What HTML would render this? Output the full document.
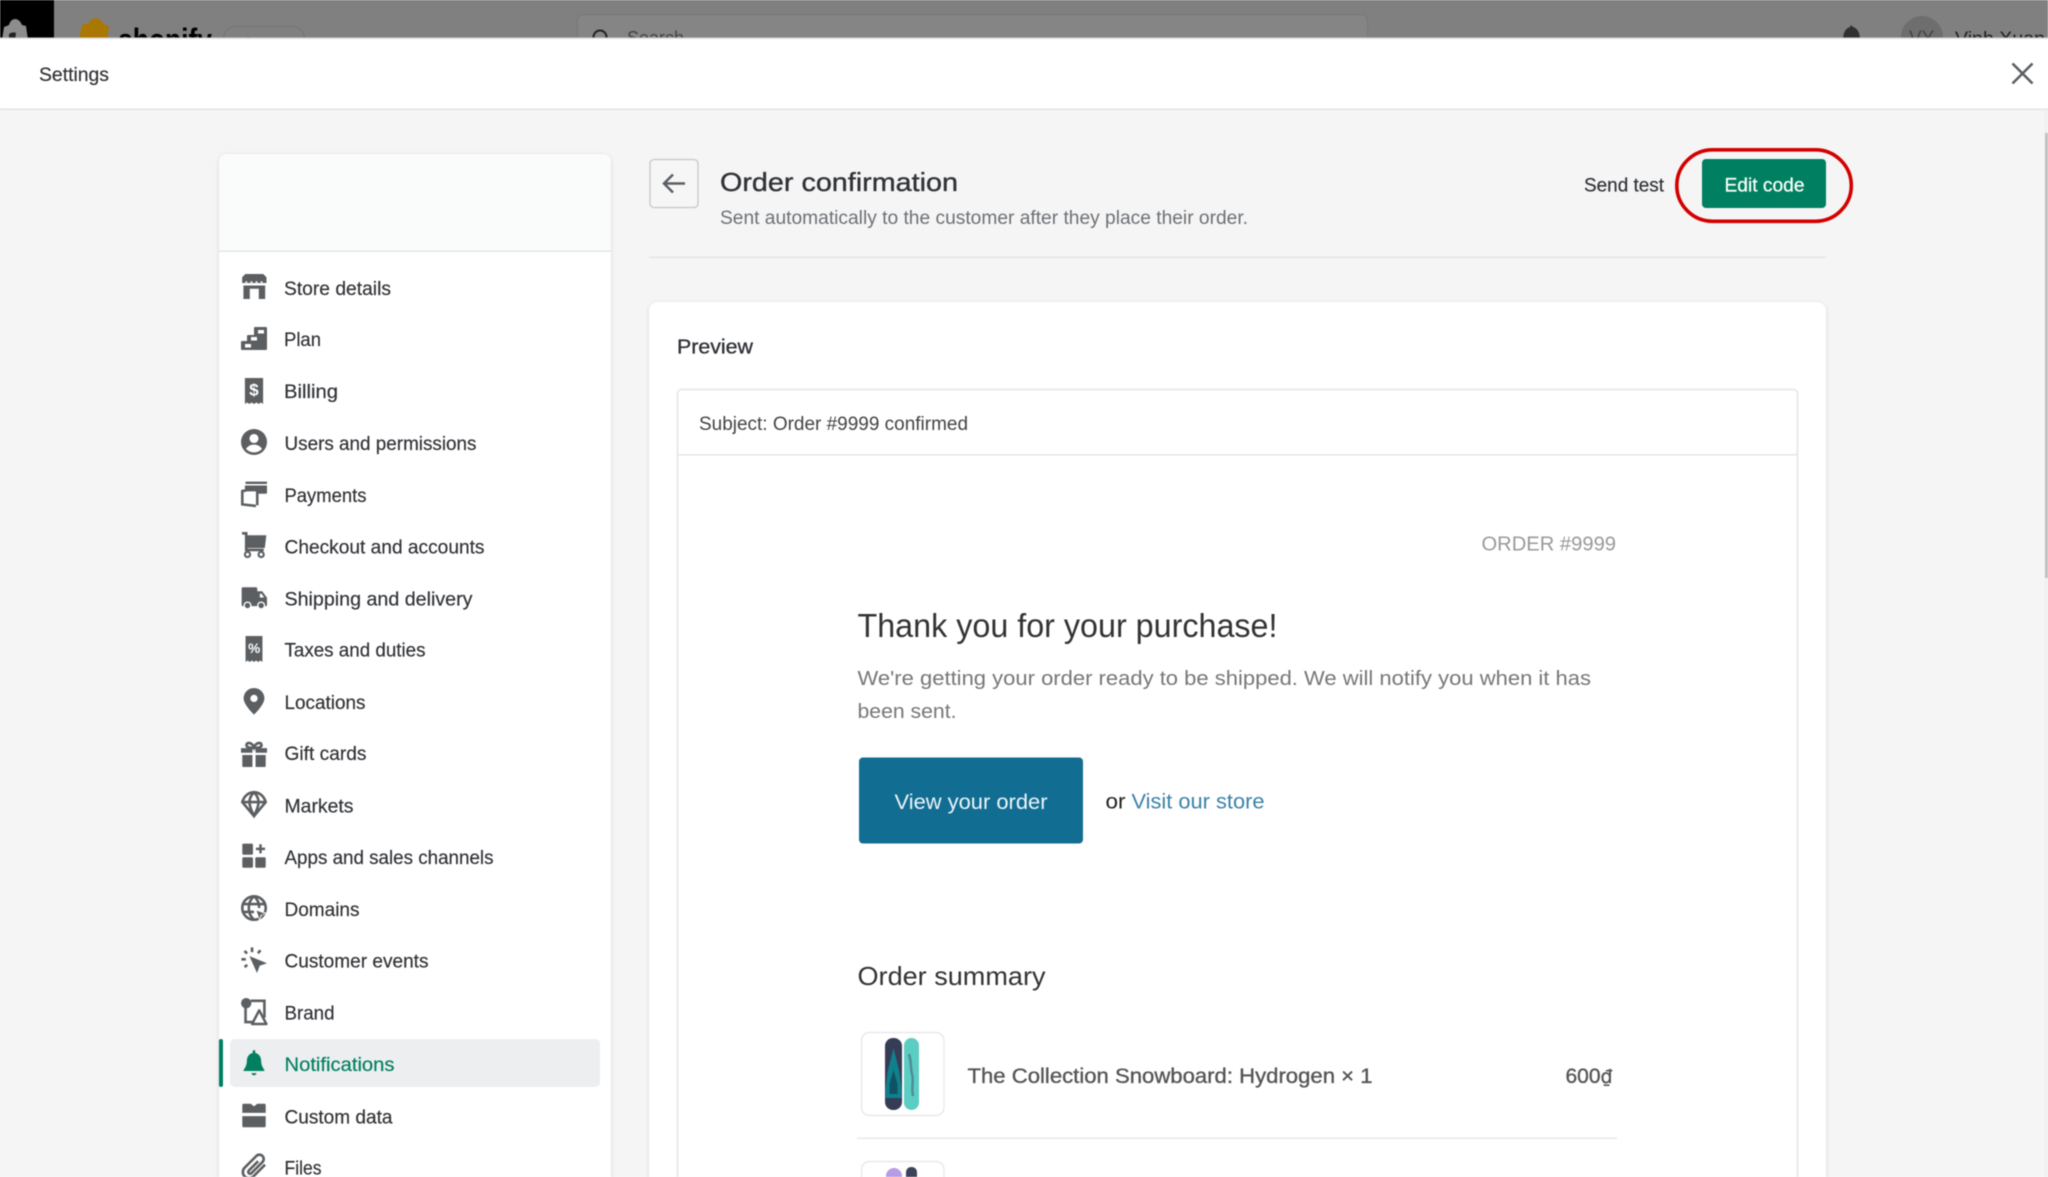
<!DOCTYPE html>
<html lang="en"><head><meta charset="utf-8"><title>Settings</title>
<style>
html,body{margin:0;padding:0;width:2048px;height:1177px;overflow:hidden;background:#f5f5f5}
svg{display:block;filter:blur(.55px)}
text{font-family:"Liberation Sans",Arial,sans-serif;font-size:19px;fill:#303236}
.s text{font-size:19px;stroke:#303236;stroke-width:.18}
.i{fill:#5c5f62}
.l{fill:none;stroke:#5c5f62;stroke-width:2}
.m{stroke:#303236;stroke-width:.35}
</style></head><body>
<svg width="2048" height="1177" viewBox="0 0 2048 1177" xmlns="http://www.w3.org/2000/svg">
<defs>
<filter id="sh" x="-5%" y="-5%" width="110%" height="110%"><feDropShadow dx="0" dy="1" stdDeviation="2" flood-color="#000" flood-opacity=".13"/></filter>
</defs>

<!-- top bar -->
<rect width="2048" height="40" fill="#808080"/>
<rect width="54" height="40" fill="#000"/>
<path d="M2 40l2-13 5-2c2-8 10-8 13 0l4 1 2 14z" fill="#8d8d8d"/>
<path d="M9 40v-6c3-2 5-2 7-1l-1 7z" fill="#222"/>
<path d="M107 40l2-14-6-2c-2-7-11-8-14-1l-7 2-3 15z" fill="#aa7700"/>
<text x="118" y="51" style="font-size:32px;font-weight:700;fill:#000" textLength="94" lengthAdjust="spacingAndGlyphs">shopify</text>
<rect x="223.500" y="26.500" width="81" height="30" rx="12" fill="none" stroke="#727272"/>
<text x="234" y="48" style="font-size:15px;fill:#444" textLength="60" lengthAdjust="spacingAndGlyphs">Winter '23</text>
<rect x="577.500" y="14.500" width="790" height="40" rx="6" fill="#858585" stroke="#777"/>
<circle cx="600" cy="37" r="6.500" fill="none" stroke="#222" stroke-width="2"/>
<text x="627" y="44" style="font-size:18px;fill:#444">Search</text>
<path d="M1843 40c0-8 3-12 7-13l1-2 2 2c4 1 7 5 7 13z" fill="#303030"/>
<circle cx="1922" cy="37" r="21" fill="#6e6e6e"/>
<text x="1909" y="44" style="font-size:19px;fill:#444">VY</text>
<text x="1955" y="45" style="font-size:19px;fill:#222" textLength="90" lengthAdjust="spacingAndGlyphs">Vinh Xuan</text>

<!-- modal -->
<rect y="38" width="2048" height="1139" fill="#f5f5f5"/>
<rect y="38" width="2048" height="71" fill="#fff"/>
<rect y="37.500" width="2048" height="1.500" fill="#dcdcdc"/>
<rect y="108.500" width="2048" height="1.500" fill="#e3e3e3"/>
<text x="39" y="81" stroke="#303236" stroke-width=".18" textLength="70" lengthAdjust="spacingAndGlyphs">Settings</text>
<path d="M2012.500 63.500l20 20M2032.500 63.500l-20 20" stroke="#5c5f62" stroke-width="2.600" fill="none"/>
<rect x="2044.500" y="110" width="3.500" height="1067" fill="#f1f1f1"/>
<rect x="2045" y="133" width="3" height="445" fill="#c1c1c1"/>

<!-- sidebar -->
<rect x="219" y="154" width="392" height="1040" rx="8" fill="#fff" filter="url(#sh)"/>
<path d="M219 251v-89a8 8 0 018-8h376a8 8 0 018 8v89z" fill="#fafbfb"/>
<rect x="219" y="250.500" width="392" height="1.500" fill="#e4e5e7"/>
<rect x="230" y="1039" width="370" height="48" rx="5" fill="#edeef0"/>
<rect x="219" y="1039" width="4" height="48" rx="2" fill="#008060"/>

<g class="s">
<text x="284" y="295" textLength="107" lengthAdjust="spacingAndGlyphs">Store details</text>
<text x="284" y="346" textLength="37" lengthAdjust="spacingAndGlyphs">Plan</text>
<text x="284" y="398" textLength="54" lengthAdjust="spacingAndGlyphs">Billing</text>
<text x="284.500" y="450" textLength="192" lengthAdjust="spacingAndGlyphs">Users and permissions</text>
<text x="284.500" y="502" textLength="82" lengthAdjust="spacingAndGlyphs">Payments</text>
<text x="284.500" y="553.500" textLength="200" lengthAdjust="spacingAndGlyphs">Checkout and accounts</text>
<text x="284.500" y="605.500" textLength="188" lengthAdjust="spacingAndGlyphs">Shipping and delivery</text>
<text x="284.500" y="656.500" textLength="141" lengthAdjust="spacingAndGlyphs">Taxes and duties</text>
<text x="284.500" y="709" textLength="81" lengthAdjust="spacingAndGlyphs">Locations</text>
<text x="284.500" y="760" textLength="82" lengthAdjust="spacingAndGlyphs">Gift cards</text>
<text x="284.500" y="812.500" textLength="69" lengthAdjust="spacingAndGlyphs">Markets</text>
<text x="284.500" y="864" textLength="209" lengthAdjust="spacingAndGlyphs">Apps and sales channels</text>
<text x="284.500" y="916" textLength="75" lengthAdjust="spacingAndGlyphs">Domains</text>
<text x="284.500" y="967.500" textLength="144" lengthAdjust="spacingAndGlyphs">Customer events</text>
<text x="284.500" y="1019.500" textLength="50" lengthAdjust="spacingAndGlyphs">Brand</text>
<text x="284.500" y="1071" textLength="110" lengthAdjust="spacingAndGlyphs" style="fill:#008060;stroke:#008060">Notifications</text>
<text x="284.500" y="1123.500" textLength="108" lengthAdjust="spacingAndGlyphs">Custom data</text>
<text x="284.500" y="1174.500" textLength="37" lengthAdjust="spacingAndGlyphs">Files</text>
</g>

<!-- icons -->
<g transform="translate(241.500,274) scale(1.28)"><path class="i" d="M3 0h14l2.500 2.500V7H.5V2.500zM1.500 9h17v10.500h-5V11.500h-7V19.500h-5z"/><path d="M3 6.300h1.500M7 6.300h1.500M11 6.300h1.500M15 6.300h1.500" stroke="#fff" stroke-width="1.100"/></g>
<g transform="translate(241,326)"><path class="i" fill-rule="evenodd" d="M255 1h11a1 1 0 011 1v21a1 1 0 01-1 1h-24a1 1 0 01-1-1v-7a1 1 0 011-1h5V10a1 1 0 011-1h6V2a1 1 0 011-1zM0 0" transform="translate(-241,0)"/><path d="M17 4h6v3.500h-6zM10 11h6v3.500h-6zM4 18h6v3.500H4z" fill="#fff"/></g>
<g transform="translate(241,378) scale(1.3)"><path class="i" d="M3 0h14v20l-1.700-1.200-1.700 1.200-1.700-1.200-1.900 1.200-1.900-1.200-1.700 1.200-1.700-1.200L3 20z"/><text x="6.300" y="13.500" style="font-size:13px;font-weight:700;fill:#fff">$</text></g>
<g transform="translate(241,429) scale(1.3)"><circle class="i" cx="10" cy="10" r="10"/><circle cx="10" cy="7.300" r="3.500" fill="#fff"/><path d="M3.800 15.300c1.800-2.600 3.800-3.300 6.200-3.300s4.400.7 6.200 3.300c-1.700 1.700-3.800 2.700-6.200 2.700s-4.500-1-6.200-2.700z" fill="#fff"/></g>
<g transform="translate(241,481) scale(1.3)"><path class="i" d="M3.500.5h16.500v1.800H3.500zM3 3.500h17v5.300a1 1 0 01-1 1h-5.500v9l-2-.3V8H3z"/><path class="l" d="M4 7.500H1.500a.5.500 0 00-.5.500V18l10.500 1.200" stroke-width="1.900"/></g>
<g transform="translate(241,532) scale(1.3)"><path class="i" d="M4.700 2.500H19.500l-1.200 9.800H4.700z"/><path class="l" d="M.8 1H4v12.800h13.500"/><circle cx="5" cy="17.300" r="2" fill="#fff" stroke="#5c5f62" stroke-width="1.600"/><circle cx="15.500" cy="17.300" r="2" fill="#fff" stroke="#5c5f62" stroke-width="1.600"/></g>
<g transform="translate(241,586) scale(1.3)"><path class="i" d="M1.500 1h10a1 1 0 011 1v2h3.800l3.700 5v5.500a1 1 0 01-1 1H1.500a1 1 0 01-1-1V2a1 1 0 011-1z"/><path d="M14.500 6h1.300l2 2.800h-3.300z" fill="#fff"/><circle class="i" cx="5" cy="15" r="2.600" stroke="#fff" stroke-width="1"/><circle class="i" cx="15.500" cy="15" r="2.600" stroke="#fff" stroke-width="1"/></g>
<g transform="translate(241,636) scale(1.3)"><path class="i" d="M3.500 0h13v20l-1.600-1.200-1.600 1.200-1.700-1.200-1.600 1.200-1.600-1.200-1.700 1.200-1.600-1.200-1.600 1.200z"/><text x="5.500" y="13" style="font-size:10.500px;font-weight:700;fill:#fff">%</text></g>
<g transform="translate(241,688) scale(1.3)"><path class="i" d="M10 0a8 8 0 00-8 8c0 5 8 12.500 8 12.500S18 13 18 8a8 8 0 00-8-8z"/><circle cx="10" cy="8" r="2.800" fill="#fff"/></g>
<g transform="translate(241,741) scale(1.3)"><path class="i" d="M0 5.500h8.800V9H0zM11.200 5.500H20V9h-8.800zM1 10.800h7.800V20H2a1 1 0 01-1-1zM11.200 10.800H19V19a1 1 0 01-1 1h-6.800z"/><path class="l" d="M10 5C8.500 1 4.300.5 4.200 3.300 4.100 5 7 5.300 10 5.300s5.900-.3 5.800-2C15.700.5 11.500 1 10 5z" stroke-width="1.700"/></g>
<g transform="translate(241,791) scale(1.3)"><path class="l" d="M1 8.500C2.500 3.500 6 1 10 1s7.500 2.500 9 7.500L10 19.300z" stroke-width="1.800"/><path class="l" d="M10 1C7.500 3.500 6.500 6 6.500 8.500S8 15.500 10 19c2-3.500 3.500-8 3.500-10.500S12.500 3.500 10 1zM1 8.500h18" stroke-width="1.600"/></g>
<g transform="translate(241,843) scale(1.3)"><rect class="i" x="1" y=".5" width="8.200" height="8.500" rx="1"/><rect class="i" x="1" y="11" width="8.200" height="8" rx="1"/><rect class="i" x="11" y="11" width="8" height="8" rx="1"/><path d="M15 1v7M11.500 4.500h7" stroke="#5c5f62" stroke-width="1.900"/></g>
<g transform="translate(241,895) scale(1.3)"><circle class="l" cx="10" cy="10" r="9"/><path class="l" d="M10 1c-3 2.500-4 5.500-4 9s1 6.500 4 9M10 1c3 2.500 4 5.500 4 9M1 7h18M1 13h9" stroke-width="1.600"/><path d="M10.500 10.500L20 14l-4 1.700L14.200 20z" fill="#fff"/><path class="i" d="M12 12l6.500 2.300-3.300 1-1 3.300z"/></g>
<g transform="translate(241,947) scale(1.3)"><path class="i" d="M6.500 7L20 12.500l-5.600 1.900L12.300 20z"/><path class="l" d="M8.500.3v3.600M2.700 3l2 2M15 2.500l-2 2.300M.3 9.500h3.400M2.800 15.500l2-1.800"/></g>
<g transform="translate(241,998) scale(1.3)"><circle class="i" cx="4" cy="4" r="4"/><path class="l" d="M7.500 2.200H18v13M3.500 7.500V18.500H9"/><path d="M14 9.500L19.500 20H8.500z" fill="#fff" stroke="#5c5f62" stroke-width="1.900" stroke-linejoin="round"/></g>
<g transform="translate(241,1050) scale(1.3)"><path d="M10 0c.6 0 1 .5 1 1.300V2.200c3 .7 4.500 3.300 4.500 6.300 0 3.700 1.700 5.500 2.500 7 .2.400 0 .7-.4.700H2.400c-.4 0-.6-.3-.4-.7.800-1.500 2.500-3.300 2.500-7 0-3 1.500-5.600 4.500-6.300v-.9C9 .5 9.400 0 10 0zM8 17.800h4c-.3 1-1 1.700-2 1.700s-1.700-.7-2-1.700z" fill="#008060"/></g>
<g transform="translate(241,1102.500) scale(1.3)"><path class="i" d="M1 8V2a1 1 0 011-1h5.500L10 3l2.500-2H18a1 1 0 011 1v6zM1 10.500h18V18a1 1 0 01-1 1H2a1 1 0 01-1-1z"/></g>
<g transform="translate(241,1153) scale(1.3)"><path class="l" d="M18.500 9L9.500 18a4.700 4.700 0 01-6.700-6.700L11.800 2.300a3.300 3.300 0 014.700 4.700L8 15.500a1.400 1.400 0 01-2-2l7.200-7.200" stroke-width="1.900"/></g>

<!-- header -->
<rect x="650" y="159.500" width="48" height="48" rx="4" fill="#f6f6f7" stroke="#c4c7ca" stroke-width="1.300"/>
<path d="M685 183.500h-20M673 174.500l-9 9 9 9" fill="none" stroke="#5c5f62" stroke-width="2.500"/>
<text class="m" x="720" y="191" style="font-size:26px" textLength="238" lengthAdjust="spacingAndGlyphs">Order confirmation</text>
<text x="720" y="224" style="fill:#6d7175" textLength="528" lengthAdjust="spacingAndGlyphs">Sent automatically to the customer after they place their order.</text>
<text x="1584" y="191.500" stroke="#303236" stroke-width=".18" textLength="80" lengthAdjust="spacingAndGlyphs">Send test</text>
<rect x="1702" y="159" width="124" height="49" rx="4" fill="#008060"/>
<text x="1724.500" y="191.500" style="fill:#fff" stroke="#fff" stroke-width=".25" textLength="80" lengthAdjust="spacingAndGlyphs">Edit code</text>
<rect x="1676.800" y="149.800" width="174.500" height="71.500" rx="36" fill="none" stroke="#d40000" stroke-width="3.600"/>
<rect x="649" y="256.500" width="1177" height="1.500" fill="#e4e5e7"/>

<!-- preview card -->
<rect x="649" y="302" width="1177" height="900" rx="9" fill="#fff" filter="url(#sh)"/>
<text class="m" x="677" y="353.500" style="font-size:20px" textLength="76" lengthAdjust="spacingAndGlyphs">Preview</text>
<rect x="677.500" y="389.500" width="1120" height="800" rx="4" fill="#fff" stroke="#e4e5e7" stroke-width="1.500"/>
<rect x="678" y="454" width="1119" height="1.500" fill="#e4e5e7"/>
<text x="699" y="430" style="fill:#444" textLength="269" lengthAdjust="spacingAndGlyphs">Subject: Order #9999 confirmed</text>

<!-- email -->
<text x="1481.500" y="550.500" style="font-size:20px;fill:#999" textLength="134.500" lengthAdjust="spacingAndGlyphs">ORDER #9999</text>
<text x="857.500" y="637" style="font-size:33px;fill:#333" textLength="420" lengthAdjust="spacingAndGlyphs">Thank you for your purchase!</text>
<text x="857.500" y="685" style="font-size:20.500px;fill:#777" textLength="733.500" lengthAdjust="spacingAndGlyphs">We're getting your order ready to be shipped. We will notify you when it has</text>
<text x="857.500" y="718" style="font-size:20.500px;fill:#777" textLength="99" lengthAdjust="spacingAndGlyphs">been sent.</text>
<rect x="859" y="757.500" width="224" height="86" rx="4" fill="#126d92"/>
<text x="894.500" y="809" style="font-size:21px;fill:#eaf5fa" textLength="153" lengthAdjust="spacingAndGlyphs">View your order</text>
<text x="1105.500" y="808.500" style="font-size:21px;fill:#222" textLength="20" lengthAdjust="spacingAndGlyphs">or</text>
<text x="1131.500" y="808.500" style="font-size:21px;fill:#3b82a8" textLength="133" lengthAdjust="spacingAndGlyphs">Visit our store</text>
<text x="857.500" y="985" style="font-size:26px;fill:#333" textLength="188" lengthAdjust="spacingAndGlyphs">Order summary</text>

<rect x="861.500" y="1032.500" width="82.500" height="83" rx="8" fill="#fff" stroke="#e5e5e5" stroke-width="1.200"/>
<rect x="885" y="1038" width="17" height="72" rx="8" fill="#353c55"/>
<path d="M893.500 1048l6 24 2 18v8h-16v-8l2-18z" fill="#10808c"/>
<path d="M893.500 1070l4 14v10h-8v-10z" fill="#0d5363"/>
<rect x="904" y="1038" width="15" height="72" rx="7.500" fill="#5ccdc2"/>
<path d="M909 1054c3 10 1 12 3 20s-1 12 1 22" stroke="#4d8b98" stroke-width="2.400" fill="none"/>
<text class="m" style="font-size:21px;fill:#555;stroke:#555" x="967.500" y="1083" textLength="405" lengthAdjust="spacingAndGlyphs">The Collection Snowboard: Hydrogen × 1</text>
<text class="m" style="font-size:21px;fill:#555;stroke:#555" x="1565.500" y="1083">600<tspan style="font-family:'DejaVu Sans',sans-serif;font-size:19px">₫</tspan></text>
<rect x="857" y="1137.500" width="760" height="1.500" fill="#e8e8e8"/>
<rect x="861.500" y="1161.500" width="82.500" height="40" rx="8" fill="#fff" stroke="#e5e5e5" stroke-width="1.200"/>
<rect x="886" y="1168" width="16" height="30" rx="8" fill="#b69be6"/>
<rect x="906" y="1167" width="11" height="30" rx="5" fill="#3a4358"/>
</svg>
</body></html>
